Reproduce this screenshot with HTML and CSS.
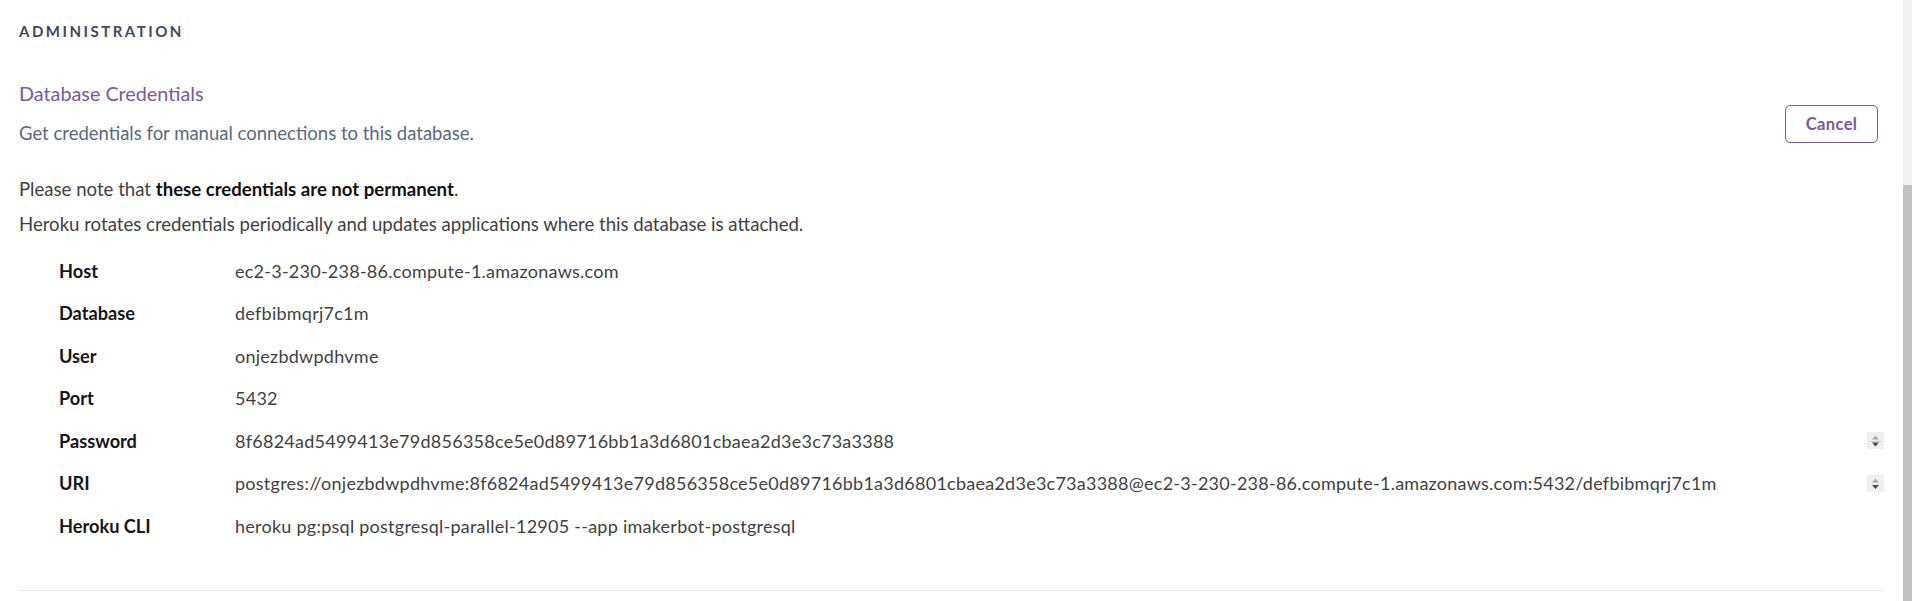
FILE: index.html
```html
<!DOCTYPE html>
<html lang="en">
<head>
<meta charset="utf-8">
<title>Database Credentials</title>
<link rel="stylesheet" href="styles.css">
</head>
<body>
<div class="page">
  <main class="content">
    <h2 class="section-label">ADMINISTRATION</h2>
    <div class="panel-header">
      <div class="panel-intro">
        <h3 class="panel-title">Database Credentials</h3>
        <p class="panel-desc">Get credentials for manual connections to this database.</p>
      </div>
      <button class="btn-cancel" type="button">Cancel</button>
    </div>
    <p class="note">Please note that <strong>these credentials are not permanent</strong>.</p>
    <p class="note note-second">Heroku rotates credentials periodically and updates applications where this database is attached.</p>
    <div class="creds">
      <div class="row"><span class="label">Host</span><span class="value">ec2-3-230-238-86.compute-1.amazonaws.com</span></div>
      <div class="row"><span class="label">Database</span><span class="value">defbibmqrj7c1m</span></div>
      <div class="row"><span class="label">User</span><span class="value">onjezbdwpdhvme</span></div>
      <div class="row"><span class="label">Port</span><span class="value">5432</span></div>
      <div class="row"><span class="label">Password</span><span class="value">8f6824ad5499413e79d856358ce5e0d89716bb1a3d6801cbaea2d3e3c73a3388</span>
        <span class="spinner"><svg width="17" height="17" viewBox="0 0 17 17"><rect width="17" height="17" fill="#efefef"/><path d="M5 7.5 L8.5 3.5 L12 7.5 Z" fill="#a8a8a8"/><rect x="3" y="9" width="11" height="1" fill="#c9c9c9"/><path d="M5 10.5 L12 10.5 L8.5 14.5 Z" fill="#4a4a4a"/></svg></span></div>
      <div class="row"><span class="label">URI</span><span class="value">postgres://onjezbdwpdhvme:8f6824ad5499413e79d856358ce5e0d89716bb1a3d6801cbaea2d3e3c73a3388@ec2-3-230-238-86.compute-1.amazonaws.com:5432/defbibmqrj7c1m</span>
        <span class="spinner"><svg width="17" height="17" viewBox="0 0 17 17"><rect width="17" height="17" fill="#efefef"/><path d="M5 7.5 L8.5 3.5 L12 7.5 Z" fill="#a8a8a8"/><path d="M5 10 L12 10 L8.5 14 Z" fill="#4a4a4a"/></svg></span></div>
      <div class="row"><span class="label">Heroku CLI</span><span class="value">heroku pg:psql postgresql-parallel-12905 --app imakerbot-postgresql</span></div>
    </div>
    <div class="divider"></div>
  </main>
  <div class="scrollbar"><div class="thumb"></div></div>
</div>
</body>
</html>
```
FILE: styles.css
```css
html, body {
  margin: 0;
  padding: 0;
  background: #ffffff;
}
body {
  font-family: "Lato", "Open Sans", "Liberation Sans", sans-serif;
  color: #3f3f44;
  overflow: hidden;
}
.page {
  display: flex;
  width: 1912px;
  height: 601px;
}
.content {
  flex: 1;
  min-width: 0;
  padding: 21px 19px 0 19px;
}
.section-label {
  margin: 0;
  font-size: 15px;
  line-height: 20px;
  font-weight: 700;
  letter-spacing: 2.5px;
  color: #3f4a5a;
}
.panel-header {
  display: flex;
  justify-content: space-between;
  align-items: flex-end;
  margin-top: 40px;
}
.panel-title {
  margin: 0;
  font-size: 19.8px;
  line-height: 24px;
  font-weight: 400;
  color: #79589f;
}
.panel-desc {
  margin: 15.5px 0 0 0;
  font-size: 18.5px;
  line-height: 24px;
  color: #596981;
}
.btn-cancel {
  font-family: inherit;
  font-size: 16.5px;
  font-weight: 700;
  letter-spacing: 0.4px;
  color: #79589f;
  background: #ffffff;
  border: 1px solid #79589f;
  border-radius: 5px;
  width: 93px;
  height: 38px;
  padding: 0;
  margin: 0 6px 1.5px 0;
  cursor: pointer;
}
.note {
  margin: 32px 0 0 0;
  font-size: 18.6px;
  line-height: 24px;
  color: #3f3f44;
}
.note strong {
  font-weight: 700;
  color: #111111;
}
.note-second {
  margin-top: 11px;
}
.creds {
  margin-top: 14px;
  padding-left: 40px;
}
.row {
  display: flex;
  align-items: center;
  height: 42.5px;
}
.label {
  width: 176px;
  flex: none;
  font-size: 18.2px;
  font-weight: 700;
  color: #16161a;
}
.value {
  flex: 1;
  font-size: 18px;
  color: #3f3f44;
  white-space: nowrap;
  letter-spacing: 0.25px;
}
.spinner {
  flex: none;
  width: 17px;
  height: 17px;
  display: flex;
}
.divider {
  margin-top: 43px;
  border-top: 1px solid #ebebeb;
}
.scrollbar {
  width: 9px;
  flex: none;
  background: #f1f1f1;
  display: flex;
  flex-direction: column;
}
.thumb {
  margin-top: 185px;
  flex: 1;
  background: #c1c1c1;
}
```
